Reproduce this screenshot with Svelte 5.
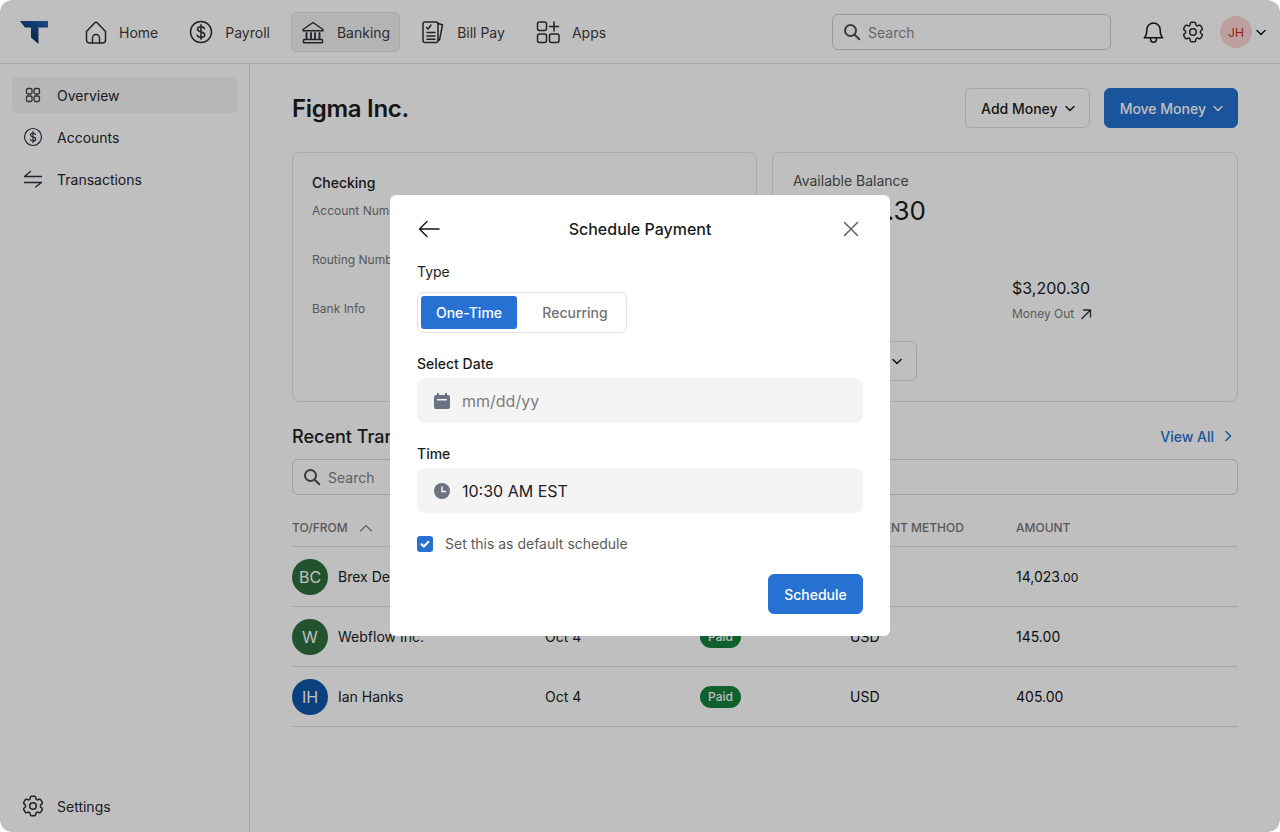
<script>
  const nav = [
    { label: 'Home', icon: 'home' },
    { label: 'Payroll', icon: 'dollar' },
    { label: 'Banking', icon: 'bank', active: true },
    { label: 'Bill Pay', icon: 'bill' },
    { label: 'Apps', icon: 'apps' }
  ];
  const rows = [
    { initials: 'BC', name: 'Brex Deposit', date: 'Oct 4', amount: '14,023', cents: '.00', color: '#2f6f3e' },
    { initials: 'W', name: 'Webflow Inc.', date: 'Oct 4', amount: '145.00', color: '#2f6f3e' },
    { initials: 'IH', name: 'Ian Hanks', date: 'Oct 4', amount: '405.00', color: '#0f56a8' }
  ];
</script>

{#snippet gear()}
  <svg width="24" height="24" viewBox="1 1 22 22" fill="none" stroke="#2b2f36" stroke-width="1.4" stroke-linejoin="round">
    <path d="M9.594 3.94c.09-.542.56-.94 1.11-.94h2.593c.55 0 1.02.398 1.11.94l.213 1.281c.063.374.313.686.645.87.074.04.147.083.22.127.324.196.72.257 1.075.124l1.217-.456a1.125 1.125 0 011.37.49l1.296 2.247a1.125 1.125 0 01-.26 1.431l-1.003.827c-.293.24-.438.613-.431.992a6.759 6.759 0 010 .255c-.007.378.138.75.43.99l1.005.828c.424.35.534.954.26 1.43l-1.298 2.247a1.125 1.125 0 01-1.369.491l-1.217-.456c-.355-.133-.75-.072-1.076.124a6.57 6.57 0 01-.22.128c-.331.183-.581.495-.644.869l-.213 1.28c-.09.543-.56.941-1.11.941h-2.594c-.55 0-1.02-.398-1.11-.94l-.213-1.281c-.062-.374-.312-.686-.644-.87a6.52 6.52 0 01-.22-.127c-.325-.196-.72-.257-1.076-.124l-1.217.456a1.125 1.125 0 01-1.369-.49l-1.297-2.247a1.125 1.125 0 01.26-1.431l1.004-.827c.292-.24.437-.613.43-.992a6.932 6.932 0 010-.255c.007-.378-.138-.75-.43-.99l-1.004-.828a1.125 1.125 0 01-.26-1.43l1.297-2.247a1.125 1.125 0 011.37-.491l1.216.456c.356.133.751.072 1.076-.124.072-.044.146-.087.22-.128.332-.183.582-.495.644-.869l.214-1.281z" />
    <circle cx="12" cy="12" r="3" />
  </svg>
{/snippet}

{#snippet chevron(color)}
  <svg width="12" height="12" viewBox="0 0 12 12" fill="none" stroke={color} stroke-width="1.5" stroke-linecap="round" stroke-linejoin="round"><path d="M2 4.5 6 8.5l4-4" /></svg>
{/snippet}

{#snippet search()}
  <svg width="18" height="18" viewBox="0 0 18 18" fill="none" stroke="#4b4f55" stroke-width="2" stroke-linecap="round"><circle cx="7.5" cy="7.5" r="5.5" /><path d="m11.7 11.7 4.6 4.6" /></svg>
{/snippet}

{#snippet navIcon(name)}
  <svg width="24" height="24" viewBox="0 0 24 24" fill="none" stroke="#2b2f36" stroke-width="1.5" stroke-linecap="round" stroke-linejoin="round">
    {#if name === 'home'}
      <path d="M3.5 11.5 11.5 3a2 2 0 0 1 3 0l8 8.5V20a3 3 0 0 1-3 3h-13a3 3 0 0 1-3-3z" />
      <path d="M9.5 23v-5a3.5 3.5 0 0 1 7 0v5" />
    {:else if name === 'dollar'}
      <circle cx="12" cy="12" r="10.5" />
      <path d="M15.5 8.7C15 7.3 13.7 6.7 12 6.7c-2 0-3.5 1-3.5 2.6 0 3.7 7.2 1.7 7.2 5.5 0 1.6-1.6 2.6-3.7 2.6-1.9 0-3.3-.8-3.8-2.2M12 4.7v14.600" />
    {:else if name === 'bank'}
      <path d="M2 9.5 12 2.5l10 7v1.200H2z" />
      <path d="M5.5 13v6M10 13v6M14 13v6M18.5 13v6" stroke-width="1.8" />
      <rect x="2.5" y="19.5" width="19" height="3.2" rx=".8" />
    {:else if name === 'bill'}
      <rect x="2" y="2" width="15" height="20.5" rx="2" />
      <path d="M17 3.5 21.5 4.8 18.5 20 17 20M5.5 7.5l1.500 1.500 3-4M6 12.500h8M6 16h8M6 19.200h8" />
    {:else}
      <rect x="1.5" y="2" width="9" height="8.5" rx="2" />
      <rect x="1.5" y="14" width="9" height="8.5" rx="2" />
      <rect x="13.500" y="14" width="9.500" height="8.5" rx="2" />
      <path d="M18 2v9M13.500 6.500h9" />
    {/if}
  </svg>
{/snippet}

<div class="app">
  <header class="topbar">
    <svg class="logo" width="28" height="23" viewBox="0 0 28 23">
      <defs>
        <linearGradient id="logo-grad" x1="1" y1="0" x2="0.2" y2="1">
          <stop offset="0" stop-color="#2066ba" />
          <stop offset="1" stop-color="#08244e" />
        </linearGradient>
      </defs>
      <path d="M0 0h28v6.500h-9.500V23L11 16.500v-10H5z" fill="url(#logo-grad)" />
    </svg>
    <nav class="topnav">
      {#each nav as item}
        <a class="topnav-item" class:active={item.active} href="#top">
          {@render navIcon(item.icon)}
          <span>{item.label}</span>
        </a>
      {/each}
    </nav>
    <div class="topsearch">
      {@render search()}
      <span>Search</span>
    </div>
    <div class="topactions">
      <svg width="24" height="24" viewBox="0 0 24 24" fill="none" stroke="#15181c" stroke-width="1.5" stroke-linejoin="round" stroke-linecap="round"><path d="M2.8 17.8c1.8-1.600 2.500-3.800 2.500-8a6.700 6.700 0 0 1 13.400 0c0 4.200.7 6.400 2.500 8z" transform="translate(-.5 0)" /><path d="M8.500 18.500c0 2.500 1.500 3.800 3 3.800s3-1.300 3-3.800" /></svg>
      {@render gear()}
      <div class="avatar">JH</div>
      <span class="avatar-chevron">{@render chevron('#15181c')}</span>
    </div>
  </header>

  <div class="body">
    <aside class="sidebar">
      <div class="sidenav">
        <a class="sidenav-item active" href="#top">
          <svg width="20" height="20" viewBox="0 0 20 20" fill="none" stroke="#3a3e45" stroke-width="1.3"><rect x="3.5" y="3.5" width="5.5" height="5.5" rx="1.5" /><rect x="11" y="3.5" width="5.5" height="5.5" rx="1.5" /><rect x="3.5" y="11" width="5.5" height="5.5" rx="1.5" /><rect x="11" y="11" width="5.5" height="5.5" rx="1.5" /></svg>
          Overview
        </a>
        <a class="sidenav-item" href="#top">
          <svg width="20" height="20" viewBox="0 0 20 20" fill="none" stroke="#2b3340" stroke-width="1.2" stroke-linecap="round"><circle cx="10" cy="10" r="8.5" /><path d="M12.5 7.5c-.4-1-1.300-1.500-2.500-1.500-1.400 0-2.500.7-2.500 1.900 0 2.600 5.200 1.300 5.200 4 0 1.200-1.200 2-2.700 2-1.300 0-2.400-.6-2.700-1.600M10 4.500v11" /></svg>
          Accounts
        </a>
        <a class="sidenav-item" href="#top">
          <svg width="20" height="20" viewBox="0 0 20 20" fill="none" stroke="#2b3340" stroke-width="1.3" stroke-linecap="round" stroke-linejoin="round"><path d="M1.500 7.500h17M1.500 7.500 7.500 2.500M1.500 13.500h17M18.500 13.500 12.500 18" /></svg>
          Transactions
        </a>
      </div>
      <a class="sidenav-item settings" href="#top">
        {@render gear()}
        Settings
      </a>
    </aside>

    <main class="main">
      <div class="titlebar">
        <h1>Figma Inc.</h1>
        <div class="titlebar-actions">
          <button class="btn">Add Money {@render chevron('#15181c')}</button>
          <button class="btn primary">Move Money {@render chevron('#ffffff')}</button>
        </div>
      </div>

      <div class="cards">
        <section class="card checking">
          <h2>Checking</h2>
          <p>Account Number</p>
          <p>Routing Number</p>
          <p>Bank Info</p>
        </section>
        <section class="card balance">
          <div class="balance-label">Available Balance</div>
          <div class="balance-value">$11,405.30</div>
          <div class="flows">
            <div>
              <div class="flow-value">$8,020.00</div>
              <div class="flow-label">Money In</div>
            </div>
            <div>
              <div class="flow-value">$3,200.30</div>
              <div class="flow-label">
                Money Out
                <svg width="12" height="12" viewBox="0 0 12 12" fill="none" stroke="#2b2f36" stroke-width="1.3" stroke-linecap="round" stroke-linejoin="round"><path d="M2 10.500 10.500 2M3.500 2h7v7" /></svg>
              </div>
            </div>
          </div>
          <button class="btn statement">Statements {@render chevron('#15181c')}</button>
        </section>
      </div>

      <div class="recent-head">
        <h2>Recent Transactions</h2>
        <a class="viewall" href="#top">
          View All
          <svg width="12" height="12" viewBox="0 0 12 12" fill="none" stroke="#2270d0" stroke-width="1.5" stroke-linecap="round" stroke-linejoin="round"><path d="M4 1.500 8.500 6 4 10.500" /></svg>
        </a>
      </div>
      <div class="tablesearch">
        {@render search()}
        <span>Search</span>
      </div>

      <div class="table">
        <div class="row thead">
          <div>TO/FROM <svg width="14" height="14" viewBox="0 0 14 14" fill="none" stroke="#8a8a8a" stroke-width="1.3" stroke-linecap="round" stroke-linejoin="round"><path d="M1.500 10 7 4.500l5.500 5.500" /></svg></div>
          <div>DATE</div>
          <div>STATUS</div>
          <div>PAYMENT METHOD</div>
          <div>AMOUNT</div>
        </div>
        {#each rows as row}
          <div class="row">
            <div class="party">
              <span class="initials" style:background={row.color}>{row.initials}</span>
              {row.name}
            </div>
            <div>{row.date}</div>
            <div><span class="paid">Paid</span></div>
            <div class="amount">USD</div>
            <div class="amount">{row.amount}{#if row.cents}<small>{row.cents}</small>{/if}</div>
          </div>
        {/each}
      </div>
    </main>
  </div>

  <div class="overlay">
    <div class="modal">
      <div class="modal-head">
        <svg width="24" height="24" viewBox="0 0 24 24" fill="none" stroke="#15181c" stroke-width="1.5" stroke-linecap="round" stroke-linejoin="round"><path d="M22 12H2.500M10 4.500 2.500 12l7.500 7.500" /></svg>
        <h3>Schedule Payment</h3>
        <svg width="24" height="24" viewBox="0 0 24 24" fill="none" stroke="#5f6368" stroke-width="1.5" stroke-linecap="round"><path d="m5.500 5.500 13 13M18.500 5.500l-13 13" /></svg>
      </div>

      <div class="label type-label">Type</div>
      <div class="segment">
        <span class="seg on">One-Time</span>
        <span class="seg">Recurring</span>
      </div>

      <div class="label date-label">Select Date</div>
      <div class="field">
        <svg width="18" height="18" viewBox="0 0 18 18"><path fill="#6b7280" fill-rule="evenodd" d="M4 1h2v2h6V1h2v2h1a2 2 0 0 1 2 2v10a2 2 0 0 1-2 2H3a2 2 0 0 1-2-2V5a2 2 0 0 1 2-2h1zM4 7h10v1.500H4z" /></svg>
        <span class="placeholder">mm/dd/yy</span>
      </div>

      <div class="label time-label">Time</div>
      <div class="field">
        <svg width="18" height="18" viewBox="0 0 18 18"><circle cx="9" cy="9" r="8" fill="#6b7280" /><path d="M9 4.500V9.500h4" fill="none" stroke="#f4f4f4" stroke-width="1.5" /></svg>
        <span>10:30 AM EST</span>
      </div>

      <div class="check-row">
        <span class="check">
          <svg width="16" height="16" viewBox="0 0 16 16" fill="none" stroke="#fff" stroke-width="2" stroke-linecap="round" stroke-linejoin="round"><path d="m4.500 8.200 2.400 2.300 4.500-4.800" /></svg>
        </span>
        Set this as default schedule
      </div>

      <div class="modal-foot">
        <button class="btn primary schedule">Schedule</button>
      </div>
    </div>
  </div>
</div>

<style>
  :global(body) {
    margin: 0;
    background: #fff;
  }

  .app {
    position: relative;
    width: 1280px;
    height: 832px;
    overflow: hidden;
    border-radius: 12px;
    background: #fff;
    color: #1a1c20;
    font-family: Inter, "Liberation Sans", sans-serif;
    font-size: 14px;
    display: flex;
    flex-direction: column;
  }

  a {
    color: inherit;
    text-decoration: none;
  }

  h1, h2, h3, p {
    margin: 0;
  }

  .topbar {
    height: 64px;
    box-sizing: border-box;
    border-bottom: 1px solid #e0e0e0;
    display: flex;
    align-items: center;
    padding: 1px 13px 0 20px;
    flex-shrink: 0;
  }

  .logo {
    flex-shrink: 0;
    margin-right: 25px;
  }

  .topnav {
    display: flex;
    align-items: center;
    gap: 11px;
  }

  .topnav-item {
    display: flex;
    align-items: center;
    gap: 12px;
    height: 40px;
    box-sizing: border-box;
    padding: 0 9px;
    border: 1px solid transparent;
    border-radius: 6px;
    color: #3b3e44;
  }

  .topnav-item.active {
    background: #f0f0f0;
    border-color: #e0e0e0;
  }

  .topsearch {
    width: 279px;
    height: 36px;
    box-sizing: border-box;
    margin-left: auto;
    border: 1px solid #cfcfcf;
    border-radius: 6px;
    display: flex;
    align-items: center;
    gap: 7px;
    padding: 0 10px;
    color: #8a8a8a;
  }

  .topactions {
    display: flex;
    align-items: center;
    margin-left: 31px;
    gap: 15px;
  }

  .avatar {
    width: 32px;
    height: 32px;
    border-radius: 50%;
    background: #fbd5d5;
    color: #c81e1e;
    font-size: 12px;
    display: flex;
    align-items: center;
    justify-content: center;
  }

  .avatar-chevron {
    display: flex;
    margin-left: -12px;
  }

  .body {
    flex: 1;
    display: flex;
    min-height: 0;
  }

  .sidebar {
    width: 250px;
    box-sizing: border-box;
    border-right: 1px solid #e0e0e0;
    padding: 13px 11px 8px 12px;
    display: flex;
    flex-direction: column;
    justify-content: space-between;
  }

  .sidenav {
    display: flex;
    flex-direction: column;
    gap: 6px;
  }

  .sidenav-item {
    display: flex;
    align-items: center;
    gap: 14px;
    height: 36px;
    padding: 0 11px;
    border-radius: 6px;
    color: #24272c;
  }

  .settings svg {
    margin: 0 -2px;
  }

  .sidenav-item.active {
    background: #f4f4f4;
  }

  .main {
    flex: 1;
    padding: 24px 42px 0;
    min-width: 0;
  }

  .titlebar {
    display: flex;
    align-items: center;
    justify-content: space-between;
    height: 40px;
  }

  h1 {
    font-size: 24px;
    font-weight: 600;
    letter-spacing: -0.3px;
  }

  .titlebar-actions {
    display: flex;
    gap: 14px;
  }

  .btn {
    height: 40px;
    box-sizing: border-box;
    display: inline-flex;
    align-items: center;
    gap: 6px;
    padding: 0 13px 0 15px;
    border: 1px solid #dcdcdc;
    border-radius: 6px;
    background: #fff;
    color: #1a1c20;
    font: 500 14px Inter, "Liberation Sans", sans-serif;
  }

  .btn.primary {
    background: #2671d1;
    border-color: #2671d1;
    color: #fff;
  }

  .cards {
    display: grid;
    grid-template-columns: 465px 466px;
    column-gap: 15px;
    margin-top: 24px;
    height: 250px;
  }

  .card {
    border: 1px solid #e3e3e3;
    border-radius: 8px;
    box-sizing: border-box;
  }

  .checking {
    padding: 21px 19px;
  }

  .checking h2 {
    font-size: 14px;
    font-weight: 500;
    line-height: 18px;
  }

  .checking p {
    font-size: 12px;
    line-height: 16px;
    color: #767676;
    margin-top: 33px;
  }

  .checking h2 + p {
    margin-top: 11px;
  }

  .balance {
    padding: 19px 20px;
  }

  .balance-label {
    color: #4f4f4f;
    font-size: 14px;
    line-height: 17px;
  }

  .balance-value {
    font-size: 26px;
    line-height: 30px;
    margin-top: 7px;
  }

  .flows {
    display: grid;
    grid-template-columns: 219px 1fr;
    margin-top: 51px;
  }

  .flow-value {
    font-size: 16px;
    line-height: 22px;
  }

  .flow-label {
    display: flex;
    align-items: center;
    gap: 6px;
    font-size: 12px;
    color: #7a7a7a;
    margin-top: 7px;
    line-height: 15px;
  }

  .statement {
    margin-top: 20px;
    width: 124px;
    justify-content: flex-end;
  }

  .recent-head {
    display: flex;
    align-items: center;
    justify-content: space-between;
    margin-top: 23px;
    height: 22px;
  }

  .recent-head h2 {
    font-size: 18px;
    font-weight: 500;
  }

  .viewall {
    display: flex;
    align-items: center;
    gap: 8px;
    color: #2270d0;
    font-weight: 500;
    padding-right: 4px;
  }

  .tablesearch {
    height: 36px;
    box-sizing: border-box;
    margin-top: 12px;
    border: 1px solid #d6d6d6;
    border-radius: 6px;
    display: flex;
    align-items: center;
    gap: 7px;
    padding: 0 10px;
    color: #7f7f7f;
  }

  .row {
    display: grid;
    grid-template-columns: 253px 155px 150px 166px 1fr;
    align-items: center;
    height: 60px;
    border-bottom: 1px solid #dcdcdc;
    box-sizing: border-box;
  }

  .thead {
    height: 52px;
    padding-top: 14px;
    font-size: 12px;
    font-weight: 500;
    color: #767676;
  }

  .thead > div {
    display: flex;
    align-items: center;
    gap: 11px;
  }

  .party {
    display: flex;
    align-items: center;
    gap: 10px;
  }

  .initials {
    width: 36px;
    height: 36px;
    border-radius: 50%;
    color: #fff;
    font-size: 16px;
    display: flex;
    align-items: center;
    justify-content: center;
  }

  .paid {
    display: inline-block;
    padding: 0 8px;
    height: 22px;
    line-height: 22px;
    border-radius: 11px;
    background: #15803d;
    color: #fff;
    font-size: 12px;
    font-weight: 500;
  }

  .amount {
    color: #111316;
  }

  .amount small {
    font-size: 12px;
  }

  .overlay {
    position: absolute;
    inset: 0;
    background: rgba(0, 0, 0, 0.25);
    display: flex;
    align-items: center;
    justify-content: center;
    border-radius: 12px;
  }

  .modal {
    width: 500px;
    height: 441px;
    box-sizing: border-box;
    margin-top: -1px;
    padding: 22px 27px;
    background: #fff;
    border-radius: 6px;
    display: flex;
    flex-direction: column;
  }

  .modal-head {
    display: flex;
    align-items: center;
    justify-content: space-between;
    height: 24px;
  }

  .modal-head svg {
    flex-shrink: 0;
  }

  h3 {
    font-size: 16px;
    font-weight: 500;
  }

  .label {
    font-size: 14px;
    font-weight: 500;
    line-height: 18px;
  }

  .type-label {
    margin-top: 22px;
    font-weight: 400;
  }

  .date-label,
  .time-label {
    margin-top: 22px;
  }

  .segment {
    margin-top: 11px;
    width: 210px;
    height: 41px;
    box-sizing: border-box;
    border: 1px solid #e3e3e3;
    border-radius: 6px;
    padding: 3px;
    display: flex;
    align-items: center;
    color: #737373;
    font-weight: 500;
  }

  .seg {
    height: 33px;
    line-height: 33px;
    text-align: center;
    border-radius: 3px;
    flex: 1;
    padding-left: 10px;
  }

  .seg.on {
    flex: 0 0 96px;
    padding-left: 0;
    background: #2671d1;
    color: #fff;
  }

  .field {
    margin-top: 5px;
    height: 45px;
    border-radius: 8px;
    background: #f4f4f4;
    display: flex;
    align-items: center;
    gap: 11px;
    padding: 0 16px;
    font-size: 16px;
    color: #1f2125;
    flex-shrink: 0;
  }

  .placeholder {
    color: #7d7d7d;
  }

  .check-row {
    display: flex;
    align-items: center;
    gap: 12px;
    margin-top: 22px;
    color: #5b5b5b;
    line-height: 17px;
  }

  .check {
    width: 16px;
    height: 16px;
    border-radius: 3px;
    background: #2671d1;
    display: flex;
  }

  .modal-foot {
    display: flex;
    justify-content: flex-end;
    margin-top: 22px;
  }

  .schedule {
    width: 95px;
    justify-content: center;
    padding: 0;
  }
</style>
